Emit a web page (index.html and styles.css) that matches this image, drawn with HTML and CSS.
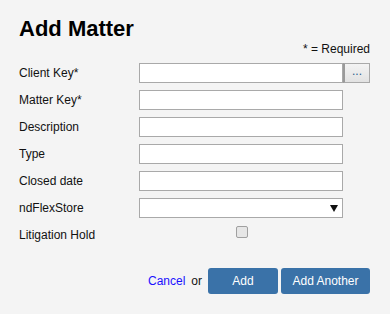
FILE: index.html
```html
<!DOCTYPE html>
<html>
<head>
<meta charset="utf-8">
<link rel="stylesheet" href="styles.css">
</head>
<body>
<div class="dialog">
  <h1 class="title">Add Matter</h1>
  <div class="required">* = Required</div>
  <form class="form">
    <div class="row">
      <label class="label">Client Key*</label>
      <div class="field field-lookup">
        <input class="input" type="text">
        <button type="button" class="lookup">...</button>
      </div>
    </div>
    <div class="row">
      <label class="label">Matter Key*</label>
      <div class="field"><input class="input" type="text"></div>
    </div>
    <div class="row">
      <label class="label">Description</label>
      <div class="field"><input class="input" type="text"></div>
    </div>
    <div class="row">
      <label class="label">Type</label>
      <div class="field"><input class="input" type="text"></div>
    </div>
    <div class="row">
      <label class="label">Closed date</label>
      <div class="field"><input class="input" type="text"></div>
    </div>
    <div class="row">
      <label class="label">ndFlexStore</label>
      <div class="field">
        <div class="select-wrap">
          <select class="select"><option></option></select>
          <svg class="arrow" width="8" height="7" viewBox="0 0 8 7"><path d="M0 0H8L4 7Z" fill="#111"/></svg>
        </div>
      </div>
    </div>
    <div class="row">
      <label class="label">Litigation Hold</label>
      <div class="field field-center"><input class="check" type="checkbox"></div>
    </div>
    <div class="actions">
      <a class="cancel" href="#">Cancel</a>
      <span class="or">or</span>
      <button type="button" class="btn btn-add">Add</button>
      <button type="button" class="btn btn-another">Add Another</button>
    </div>
  </form>
</div>
</body>
</html>
```
FILE: styles.css
```css
html, body {
  margin: 0;
  padding: 0;
  background: #f4f4f4;
}
body {
  font-family: "Liberation Sans", Arial, sans-serif;
  font-size: 12px;
  color: #111;
}
.dialog {
  width: 351px;
  padding-left: 19px;
}
.title {
  margin: 0;
  padding-top: 16px;
  font-size: 22px;
  line-height: 26px;
  font-weight: bold;
  color: #000;
}
.required {
  text-align: right;
  line-height: 14px;
  margin-bottom: 7px;
}
.form {
  margin: 0;
}
.row {
  display: flex;
  align-items: center;
  height: 20px;
  margin-bottom: 7px;
}
.label {
  width: 120px;
  flex: none;
  line-height: 14px;
}
.field {
  display: flex;
  width: 204px;
  height: 20px;
}
.field-lookup {
  width: 231px;
}
.field-center {
  justify-content: center;
  align-items: flex-start;
}
.input {
  box-sizing: border-box;
  width: 204px;
  height: 20px;
  margin: 0;
  border: 1px solid #a9a9a9;
  background: #fff;
  padding: 0 3px;
  font: inherit;
}
.lookup {
  box-sizing: border-box;
  width: 27px;
  height: 20px;
  margin: 0;
  padding: 0 0 4px;
  border: 1px solid #a9a9a9;
  border-left-width: 2px;
  border-left-color: #9a9a9a;
  background: linear-gradient(#f3f3f3, #e2e2e2);
  font: 12px "Liberation Sans", Arial, sans-serif;
  color: #2c5d8c;
}
.select-wrap {
  position: relative;
  width: 204px;
  height: 20px;
}
.select {
  box-sizing: border-box;
  appearance: none;
  -webkit-appearance: none;
  width: 204px;
  height: 20px;
  margin: 0;
  border: 1px solid #a9a9a9;
  border-radius: 0;
  background: #fff;
  font: inherit;
}
.arrow {
  position: absolute;
  left: 191px;
  top: 7px;
  pointer-events: none;
}
.check {
  appearance: none;
  -webkit-appearance: none;
  box-sizing: border-box;
  width: 12px;
  height: 12px;
  margin: 1px 0 0 1px;
  border: 1px solid #a0a0a0;
  border-radius: 2px;
  background: #e6e6e6;
}
.actions {
  display: flex;
  justify-content: flex-end;
  align-items: center;
  margin-top: 23px;
  height: 26px;
}
.cancel {
  color: #1a10ff;
  text-decoration: none;
}
.or {
  margin-left: 6px;
  margin-right: 6px;
}
.btn {
  height: 26px;
  margin: 0;
  border: none;
  border-radius: 3px;
  background: #3a72a8;
  color: #fff;
  font: 12px "Liberation Sans", Arial, sans-serif;
  padding: 0;
}
.btn-add {
  width: 70px;
}
.btn-another {
  width: 89px;
  margin-left: 3px;
}
```
